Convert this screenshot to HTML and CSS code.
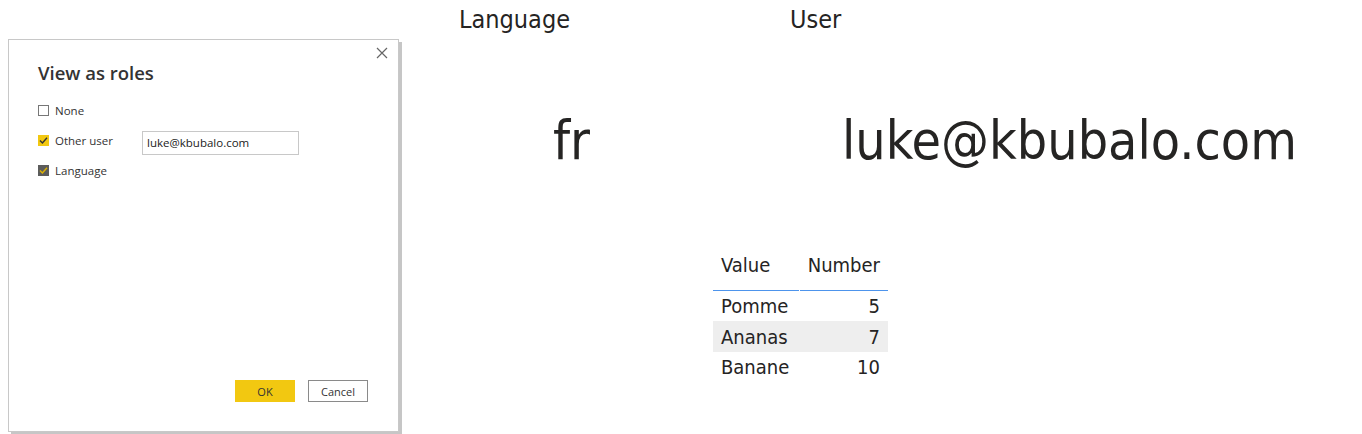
FILE: index.html
```html
<!DOCTYPE html>
<html>
<head>
<meta charset="utf-8">
<link rel="stylesheet" href="styles.css">
</head>
<body>
<div class="page">
  <div class="dialog">
    <button class="close" aria-label="Close">
      <svg width="12" height="12" viewBox="0 0 12 12"><path d="M1 1L11 11M11 1L1 11" stroke="#666" stroke-width="1.2" fill="none"/></svg>
    </button>
    <h1 class="dialog-title">View as roles</h1>
    <div class="options">
      <div class="opt">
        <span class="cb"></span><span class="lbl">None</span>
      </div>
      <div class="opt">
        <span class="cb cb-on"><svg width="9" height="9" viewBox="0 0 9 9"><path d="M1 4.6L3.4 7L8 1.8" stroke="#333" stroke-width="1.4" fill="none"/></svg></span><span class="lbl lbl-w">Other user</span>
        <span class="input">luke@kbubalo.com</span>
      </div>
      <div class="opt">
        <span class="cb cb-dim"><svg width="9" height="9" viewBox="0 0 9 9"><path d="M1 4.6L3.4 7L8 1.8" stroke="#e0b400" stroke-width="1.4" fill="none"/></svg></span><span class="lbl">Language</span>
      </div>
    </div>
    <div class="actions">
      <span class="btn btn-ok">OK</span>
      <span class="btn btn-cancel">Cancel</span>
    </div>
  </div>

  <div class="report">
    <div class="cards">
      <div class="card card-lang">
        <div class="card-title">Language</div>
        <div class="card-value">fr</div>
      </div>
      <div class="card card-user">
        <div class="card-title">User</div>
        <div class="card-value">luke@kbubalo.com</div>
      </div>
    </div>
    <div class="tbl">
      <div class="cell head c1">Value</div>
      <div class="cell head c2">Number</div>
      <div class="cell c1">Pomme</div>
      <div class="cell c2">5</div>
      <div class="cell alt c1">Ananas</div>
      <div class="cell alt c2">7</div>
      <div class="cell c1">Banane</div>
      <div class="cell c2">10</div>
    </div>
  </div>
</div>
</body>
</html>
```
FILE: styles.css
```css
html, body { margin: 0; padding: 0; background: #fff; }
body { width: 1362px; height: 434px; overflow: hidden; }
.page { display: flex; align-items: flex-start; }

.dialog {
  position: relative;
  margin: 39px 0 0 8px;
  width: 391px;
  height: 393px;
  border: 1px solid #c8c8c8;
  background: #fff;
  box-shadow: 3px 3px 0 #c6c6c6;
  font-family: "Open Sans", "Noto Sans", sans-serif;
  color: #333;
  display: flex;
  flex-direction: column;
  box-sizing: border-box;
  padding: 0 0 29px 29px;
}
.close {
  position: absolute;
  top: 7px; right: 10px;
  border: 0; background: none; padding: 0;
  width: 12px; height: 12px;
}
.dialog-title {
  margin: 21px 0 0 0;
  font-size: 18.5px;
  font-weight: 600;
  line-height: 24px;
  color: #333;
}
.options { display: flex; flex-direction: column; gap: 12px; margin-top: 16px; }
.opt { display: flex; align-items: center; height: 18px; }
.cb {
  width: 11px; height: 11px;
  box-sizing: border-box;
  border: 1.5px solid #777;
  margin-right: 6px;
  display: flex; align-items: center; justify-content: center;
}
.cb-on { background: #f2c811; border: 0; }
.cb-dim { background: #5c5c5c; border: 0; }
.lbl { font-size: 11.5px; color: #333; }
.lbl-w { width: 87px; }
.input {
  width: 157px; height: 24px;
  margin-top: 6px;
  box-sizing: border-box;
  border: 1px solid #c8c8c8;
  font-size: 11.5px;
  line-height: 22px;
  padding-left: 4px;
  color: #222;
}
.actions {
  margin-top: auto;
  display: flex;
  justify-content: flex-end;
  gap: 13px;
  padding-right: 30px;
}
.btn {
  width: 60px; height: 22px;
  box-sizing: border-box;
  display: flex; align-items: center; justify-content: center;
  font-size: 11px;
  color: #333;
}
.btn-ok { background: #f2c811; }
.btn-cancel { border: 1px solid #8a8a8a; }

.report {
  font-family: "DejaVu Sans Condensed", "DejaVu Sans", sans-serif;
  color: #252423;
  display: flex;
  flex-direction: column;
  align-items: flex-start;
  margin-left: 60px;
}
.cards { display: flex; }
.card { display: flex; flex-direction: column; }
.card-lang { width: 331px; }
.card-title { font-size: 25px; line-height: 28px; margin-top: 6px; }
.card-value { font-size: 54px; line-height: 64px; margin-top: 75px; }
.card-lang .card-value { margin-left: 94px; }
.card-user .card-value { margin-left: 52px; font-size: 53.3px; }

.tbl {
  margin: 67px 0 0 254px;
  display: grid;
  grid-template-columns: 87px 88px;
  grid-template-rows: 51px 30px 31px 30px;
  column-gap: 0;
  font-size: 20px;
}
.cell {
  display: flex;
  align-items: center;
  padding: 0 8px;
  box-sizing: border-box;
  white-space: nowrap;
}
.cell.c2 { justify-content: flex-end; }
.cell.head { border-bottom: 1px solid #4d94ec; padding-bottom: 1px; }
.cell.head.c1 { margin-right: 1px; }
.cell.alt { background: #eeeeee; }
```
